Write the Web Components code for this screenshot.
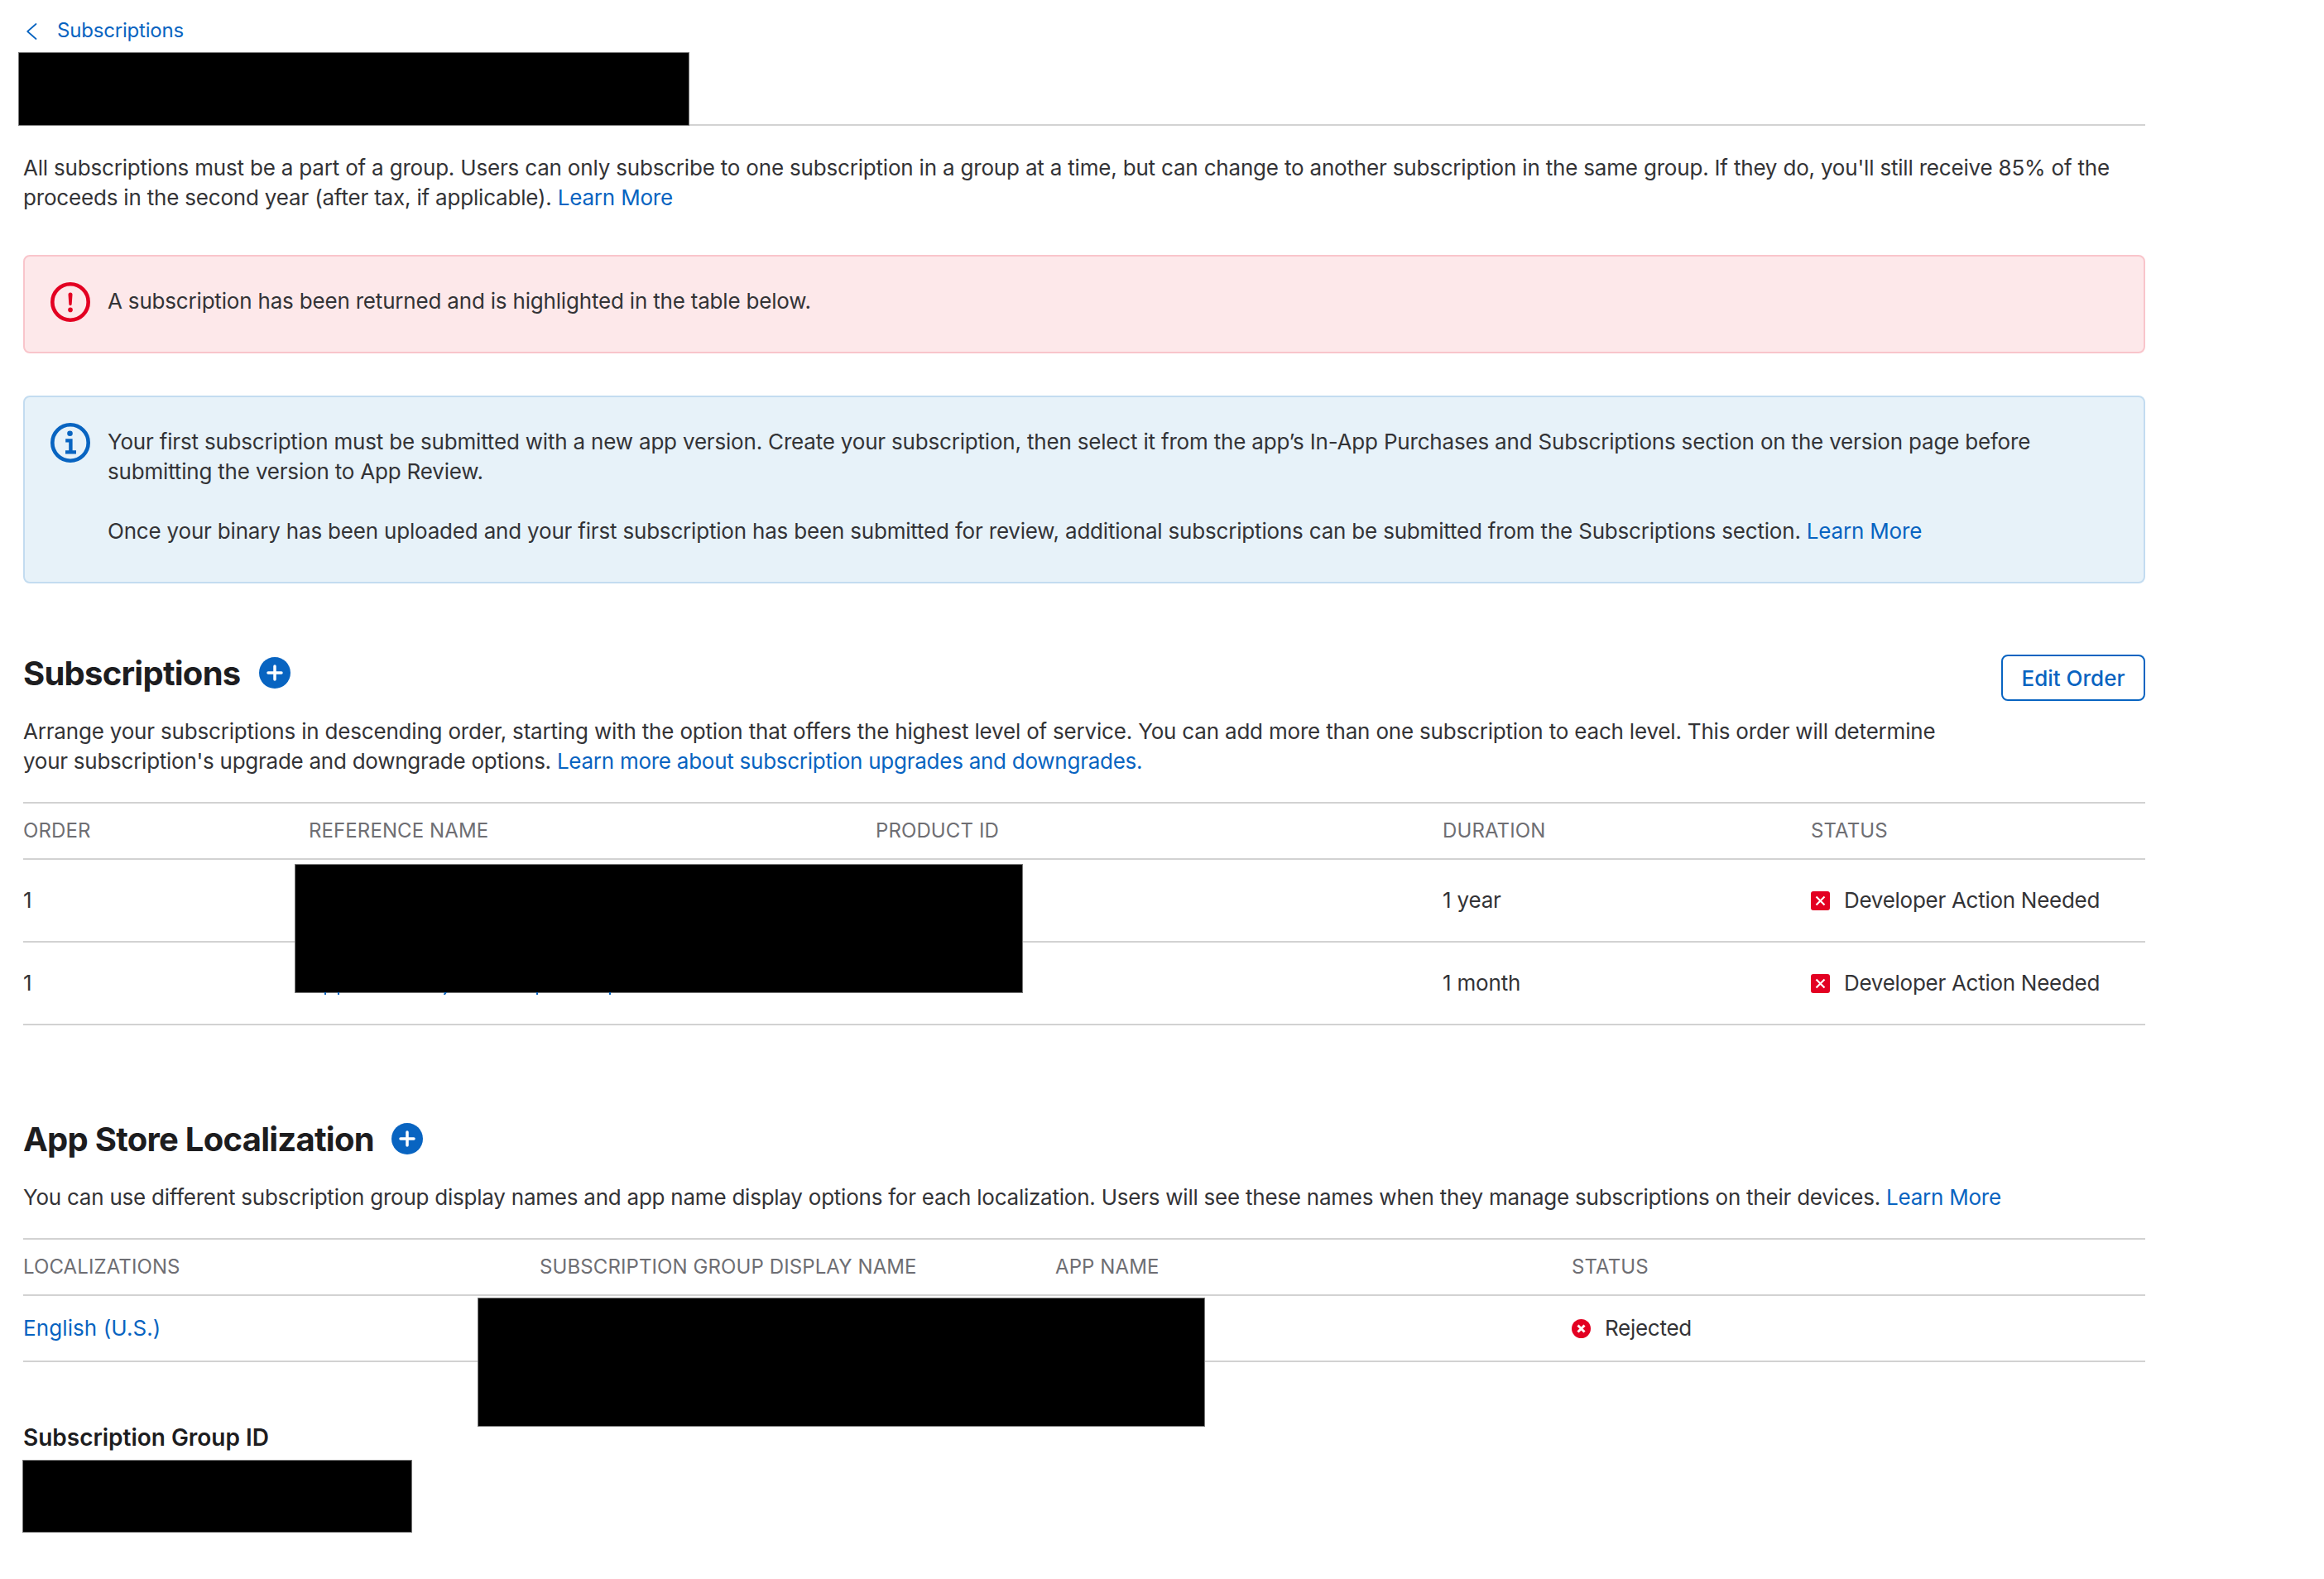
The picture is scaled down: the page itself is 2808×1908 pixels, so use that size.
<!DOCTYPE html>
<html lang="en">
<head>
<meta charset="utf-8">
<title>Subscriptions</title>
<style>
  html, body { margin: 0; background: #fff; }
  body { font: 400 26px/36px Inter, "Liberation Sans", sans-serif; color: #333336; letter-spacing: -.19px; }
</style>
</head>
<body>
<group-page>
  <back-link slot="back">Subscriptions</back-link>

  <page-text>All subscriptions must be a part of a group. Users can only subscribe to one subscription in a group at a time, but can change to another subscription in the same group. If they do, you'll still receive 85% of the<br>proceeds in the second year (after tax, if applicable). <text-link>Learn More</text-link></page-text>

  <notice-box kind="error" style="margin-top:53px">A subscription has been returned and is highlighted in the table below.</notice-box>

  <notice-box kind="info" style="margin-top:51px">Your first subscription must be submitted with a new app version. Create your subscription, then select it from the app’s In-App Purchases and Subscriptions section on the version page before<br>submitting the version to App Review.<br><br>Once your binary has been uploaded and your first subscription has been submitted for review, additional subscriptions can be submitted from the Subscriptions section. <text-link>Learn More</text-link></notice-box>

  <section-head style="margin-top:86px" action="Edit Order">Subscriptions</section-head>
  <page-text style="margin-top:17px">Arrange your subscriptions in descending order, starting with the option that offers the highest level of service. You can add more than one subscription to each level. This order will determine<br><span style="letter-spacing:-.26px">your subscription's upgrade and downgrade options. <text-link>Learn more about subscription upgrades and downgrades.</text-link></span></page-text>

  <data-table style="margin-top:33px; --cols: 345px 685px 685px 445px 1fr">
    <table-row head><span>Order</span><span>Reference Name</span><span>Product ID</span><span>Duration</span><span>Status</span></table-row>
    <table-row><span>1</span><span></span><span></span><span>1 year</span><status-label kind="square">Developer Action Needed</status-label></table-row>
    <table-row><span>1</span><span></span><span></span><span>1 month</span><status-label kind="square">Developer Action Needed</status-label></table-row>
  </data-table>

  <section-head style="margin-top:115px; --plus-gap:21px">App Store Localization</section-head>
  <page-text style="margin-top:17px; letter-spacing:-.235px">You can use different subscription group display names and app name display options for each localization. Users will see these names when they manage subscriptions on their devices. <text-link>Learn More</text-link></page-text>

  <data-table style="margin-top:33px; --cols: 624px 623px 624px 1fr; --row: 80px">
    <table-row head><span>Localizations</span><span>Subscription Group Display Name</span><span>App Name</span><span>Status</span></table-row>
    <table-row><text-link style="letter-spacing:.1px">English (U.S.)</text-link><span></span><span></span><status-label kind="round">Rejected</status-label></table-row>
  </data-table>

  <id-block>Subscription Group ID</id-block>

  <redact-box slot="over" ticks style="left:329px; top:1045px; width:878px; height:154px"></redact-box>
  <redact-box slot="over" style="left:550px; top:1569px; width:877px; height:154px"></redact-box>
</group-page>

<script>
function define(name, html) {
  customElements.define(name, class extends HTMLElement {
    connectedCallback() {
      if (this.shadowRoot) return;
      const root = this.attachShadow({ mode: 'open' });
      root.innerHTML = typeof html === 'function' ? html(this) : html;
    }
  });
}

const BLUE = '#0864c1';
const RED = '#e30022';
const RULE = '#d2d2d2';

define('group-page', `
  <style>
    :host { display: block; position: relative; width: 2564px; margin-left: 28px; height: 1908px; }
    .title { height: 87px; margin: 7px 0 31px; border-bottom: 2px solid ${RULE}; }
    .title i { display: block; width: 809px; height: 87px; margin-left: -5px; padding-top: 1px; box-sizing: border-box;
      background: #000; box-shadow: 0 0 0 1px #777; position: relative; top: 1px; }
  </style>
  <slot name="back"></slot>
  <div class="title"><i></i></div>
  <slot></slot>
  <slot name="over"></slot>`);

define('back-link', `
  <style>
    :host { display: flex; align-items: center; height: 56px; color: ${BLUE}; font-size: 24px; }
    span { padding-top: 18px; display: flex; align-items: center; }
    svg { width: 14px; height: 20px; margin: 2px 23px 0 4px; }
  </style>
  <span><svg viewBox="0 0 14 20" fill="none" stroke="${BLUE}" stroke-width="1.7" stroke-linecap="round" stroke-linejoin="round"><path d="M11.5 1 1.2 10l10.3 9"/></svg><slot></slot></span>`);

define('page-text', `<style>:host { display: block; white-space: nowrap; padding-top: 2px; margin-bottom: -2px; }</style><slot></slot>`);

define('text-link', `<style>:host { color: ${BLUE}; }</style><slot></slot>`);

define('notice-box', el => {
  const error = el.getAttribute('kind') === 'error';
  const c = error ? RED : BLUE;
  const icon = error
    ? `<circle cx="24" cy="24" r="21.7" fill="none" stroke="${c}" stroke-width="4.6"/><path d="M21.5 15a2.5 2.5 0 0 1 5 0l-.8 11.5a1.7 1.7 0 0 1-3.4 0z" fill="${c}"/><circle cx="24" cy="33.4" r="2.8" fill="${c}"/>`
    : `<circle cx="24" cy="24" r="21.7" fill="none" stroke="${c}" stroke-width="4.6"/><circle cx="23.5" cy="12.8" r="3.3" fill="${c}"/><path d="M18.2 21.4h6.2v14M18 35.4h13" fill="none" stroke="${c}" stroke-width="4.4"/>`;
  return `<style>
    :host { display: flex; gap: 21px; box-sizing: border-box; padding: 26px 24px 43px 31px;
      border: 2px solid ${error ? '#f9c5cb' : '#c3dcf0'}; border-radius: 8px;
      background: ${error ? '#fde8ea' : '#e7f2f9'}; white-space: nowrap; }
    svg { flex: none; width: 48px; height: 48px; margin: 5px 0 -20px; }
    div { padding-top: 10px; }
  </style><svg viewBox="0 0 48 48">${icon}</svg><div><slot></slot></div>`;
});

define('section-head', el => {
  const action = el.getAttribute('action');
  return `<style>
    :host { display: flex; align-items: flex-start; height: 56px; }
    h2 { margin: 0; padding-top: 1px; font: 700 40px/44px Inter, "Liberation Sans", sans-serif; color: #1d1d1f; letter-spacing: -.75px; white-space: nowrap; }
    svg { width: 38px; height: 38px; margin: 3px 0 0 var(--plus-gap, 23px); }
    button { margin-left: auto; box-sizing: border-box; width: 174px; height: 56px; padding: 0; border: 2px solid ${BLUE};
      border-radius: 8px; background: #fff; color: ${BLUE}; font: 500 26px Inter, "Liberation Sans", sans-serif; }
  </style><h2><slot></slot></h2>
  <svg viewBox="0 0 38 38"><circle cx="19" cy="19" r="19" fill="${BLUE}"/><path d="M19 11v16M11 19h16" stroke="#fff" stroke-width="3.5" stroke-linecap="round"/></svg>
  ${action ? `<button type="button">${action}</button>` : ''}`;
});

define('data-table', `<style>:host { display: block; border-top: 2px solid ${RULE}; }</style><slot></slot>`);

define('table-row', `<style>
    :host { display: grid; grid-template-columns: var(--cols); align-items: center; box-sizing: border-box;
      border-bottom: 2px solid ${RULE}; height: var(--row, 100px); }
    :host([head]) { height: 68px; color: #6e6e73; font-size: 24px; text-transform: uppercase; letter-spacing: .1px; }
  </style><slot></slot>`);

define('status-label', el => {
  const square = el.getAttribute('kind') === 'square';
  const shape = square
    ? `<rect width="23" height="23" rx="3" fill="${RED}"/><path d="M6.5 6.5l10 10M16.5 6.5l-10 10" stroke="#fff" stroke-width="2.2"/>`
    : `<circle cx="11.5" cy="11.5" r="11.5" fill="${RED}"/><path d="M7.5 7.5l8 8M15.5 7.5l-8 8" stroke="#fff" stroke-width="3"/>`;
  return `<style>
    :host { display: flex; align-items: center; gap: 17px; white-space: nowrap; letter-spacing: -.28px; }
    svg { width: 23px; height: 23px; flex: none; }
  </style><svg viewBox="0 0 23 23">${shape}</svg><slot></slot>`;
});

define('id-block', `<style>
    :host { display: block; margin-top: 73px; }
    b { display: block; font-size: 28px; font-weight: 600; color: #1d1d1f; letter-spacing: -.02px; white-space: nowrap; }
    i { display: block; width: 469px; height: 86px; margin-top: 10px; background: #000; box-shadow: 0 0 0 1px #777; }
  </style><b><slot></slot></b><i></i>`);

define('redact-box', el => `<style>
    :host { display: block; position: absolute; background: #000; box-shadow: 0 0 0 1px #777; }
    svg { position: absolute; left: 0; top: 100%; width: 400px; height: 3px; }
  </style>${el.hasAttribute('ticks') ? `<svg viewBox="0 0 400 3"><path d="M35 0h2v3h-2zM51 0h2v3h-2zM180 0h3l-2 3h-2zM291 0h2v3h-2zM379 0h2v3h-2z" fill="${BLUE}"/></svg>` : ''}`);
</script>
</body>
</html>
